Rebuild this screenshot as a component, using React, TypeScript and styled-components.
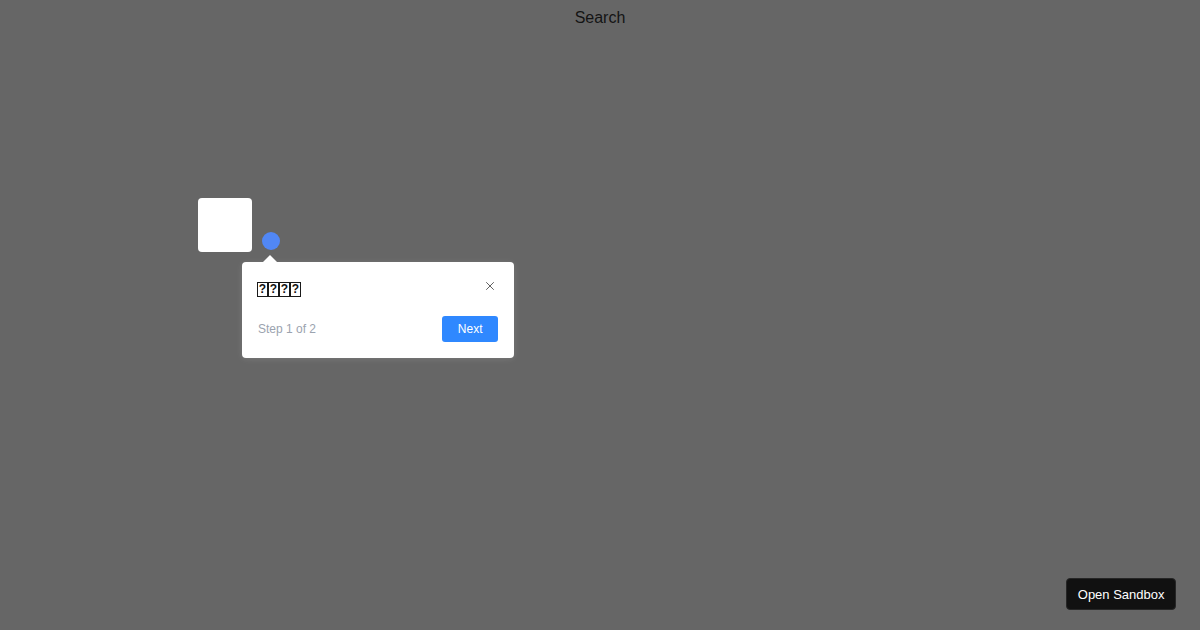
import React from 'react';
import styled, { createGlobalStyle } from 'styled-components';
import { X } from 'lucide-react';

const GlobalStyle = createGlobalStyle`
  html, body {
    margin: 0;
    padding: 0;
    background: #666666;
    font-family: 'Liberation Sans', Arial, sans-serif;
  }
`;

const Page = styled.div`
  position: relative;
  width: 100%;
  height: 100vh;
  overflow: hidden;
  background: #666666;
`;

const Header = styled.header`
  display: flex;
  justify-content: center;
  padding-top: 9px;
  font-size: 16px;
  line-height: 18px;
  color: #141414;
`;

const Spotlight = styled.div`
  position: absolute;
  left: 198px;
  top: 198px;
  width: 54px;
  height: 54px;
  border-radius: 4px;
  background: #ffffff;
`;

const Beacon = styled.div`
  position: absolute;
  left: 262px;
  top: 232px;
  width: 18px;
  height: 18px;
  border-radius: 50%;
  background: #5187f5;
`;

const Tooltip = styled.div`
  position: absolute;
  left: 242px;
  top: 262px;
  width: 272px;
  box-sizing: border-box;
  padding: 16px;
  background: #ffffff;
  border-radius: 4px;
  box-shadow: 0 1px 6px rgba(255, 255, 255, 0.12);

  &::before {
    content: '';
    position: absolute;
    left: 21px;
    top: -7px;
    border-left: 7px solid transparent;
    border-right: 7px solid transparent;
    border-bottom: 7px solid #ffffff;
  }
`;

const TitleRow = styled.div`
  display: flex;
  align-items: center;
  justify-content: space-between;
  height: 24px;
`;

const Title = styled.h4`
  display: flex;
  margin: 0 0 2px -1px;
  font-size: 16px;
  font-weight: 700;
  color: #1a1a1a;
`;

/* missing-glyph boxes, as the title shows in the reference */
const Tofu = styled.span`
  display: inline-block;
  box-sizing: border-box;
  width: 11px;
  height: 15px;
  border: 1px solid #1a1a1a;
  font-size: 12px;
  font-weight: 700;
  line-height: 13px;
  text-align: center;
  color: #111111;
`;

const CloseButton = styled.button`
  display: flex;
  align-items: center;
  justify-content: center;
  width: 20px;
  height: 20px;
  margin-top: -8px;
  margin-right: -2px;
  padding: 0;
  border: none;
  background: none;
  color: #555555;
  cursor: pointer;
`;

const Footer = styled.div`
  display: flex;
  align-items: center;
  justify-content: space-between;
  margin-top: 14px;
`;

const StepText = styled.span`
  font-size: 12px;
  color: #9ba3af;
`;

const NextButton = styled.button`
  height: 26px;
  padding: 0 15.5px;
  border: none;
  border-radius: 3px;
  background: #2f88ff;
  color: #ffffff;
  font-family: inherit;
  font-size: 12px;
  cursor: pointer;
`;

const SandboxButton = styled.button`
  position: absolute;
  right: 24px;
  bottom: 20px;
  height: 32px;
  padding: 0 10.5px;
  border: 1px solid #262626;
  border-radius: 4px;
  background: #111111;
  color: #ffffff;
  font-family: inherit;
  font-size: 13px;
  cursor: pointer;
`;

export default function App() {
  const title = '????';
  return (
    <Page>
      <GlobalStyle />
      <Header>Search</Header>
      <Spotlight />
      <Beacon />
      <Tooltip>
        <TitleRow>
          <Title>
            {title.split('').map((ch, i) => (
              <Tofu key={i}>{ch}</Tofu>
            ))}
          </Title>
          <CloseButton aria-label="Close">
            <X size={14} strokeWidth={1.6} />
          </CloseButton>
        </TitleRow>
        <Footer>
          <StepText>Step 1 of 2</StepText>
          <NextButton>Next</NextButton>
        </Footer>
      </Tooltip>
      <SandboxButton>Open Sandbox</SandboxButton>
    </Page>
  );
}
